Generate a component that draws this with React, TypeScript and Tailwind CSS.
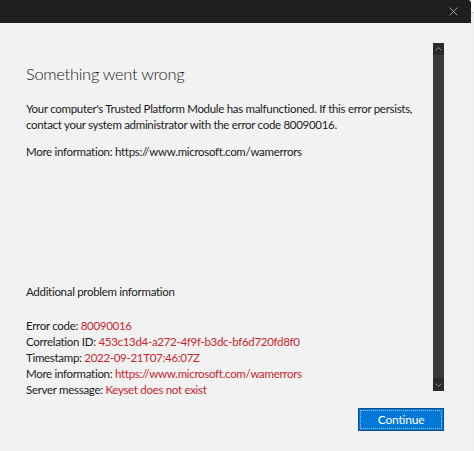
export default function App() {
  const font = { fontFamily: 'Lato, "Noto Sans", sans-serif' };
  return (
    <div className="flex w-[474px] h-[451px] bg-[#f3f3f3]" style={font}>
      <div className="flex flex-col w-[471px] h-full">
        {/* Title bar */}
        <div className="flex items-center justify-end h-[23px] bg-[#1f1f1f] rounded-tr-[3px] pr-[13px]">
          <svg width="9" height="9" viewBox="0 0 9 9" className="text-[#9a9a9a]">
            <path d="M0.5 0.5 L8.5 8.5 M8.5 0.5 L0.5 8.5" stroke="currentColor" strokeWidth="1" />
          </svg>
        </div>

        {/* Body */}
        <div className="flex flex-col flex-1 bg-[#f2f2f2]">
          <div className="flex h-[368px]">
            <div className="flex flex-col flex-1 pl-[26px] pt-[37px] text-[11.5px] leading-[16px] tracking-[-0.3px] text-[#1b1b1b]">
              <h1 className="text-[16.5px] leading-[28px] tracking-[-0.3px] font-light text-[#1a1a1a]">Something went wrong</h1>
              <p className="mt-[13px]">
                Your computer's Trusted Platform Module has malfunctioned. If this error persists, contact your
                system administrator with the error code 80090016.
              </p>
              <p className="mt-[11px]">More information: https://www.microsoft.com/wamerrors</p>

              <p className="mt-[124px]">Additional problem information</p>
              <div className="mt-[18px]">
                <div>
                  Error code: <span className="text-[#c9252d]">80090016</span>
                </div>
                <div>
                  Correlation ID: <span className="text-[#c9252d]">453c13d4-a272-4f9f-b3dc-bf6d720fd8f0</span>
                </div>
                <div>
                  Timestamp: <span className="text-[#c9252d]">2022-09-21T07:46:07Z</span>
                </div>
                <div>
                  More information: <span className="text-[#c9252d]">https://www.microsoft.com/wamerrors</span>
                </div>
                <div>
                  Server message: <span className="text-[#c9252d]">Keyset does not exist</span>
                </div>
              </div>
            </div>

            {/* Scrollbar */}
            <div className="flex flex-col w-[11px] mt-[20px] mr-[27px] bg-[#3a3a3a]">
              <div className="flex items-center justify-center h-[12px] bg-[#2b2b2b]">
                <svg width="7" height="4" viewBox="0 0 7 4">
                  <path d="M0.5 3.5 L3.5 0.5 L6.5 3.5" stroke="#8a8a8a" strokeWidth="1" fill="none" />
                </svg>
              </div>
              <div className="flex-1" />
              <div className="flex items-center justify-center h-[13px] bg-[#2b2b2b]">
                <svg width="7" height="4" viewBox="0 0 7 4">
                  <path d="M0.5 0.5 L3.5 3.5 L6.5 0.5" stroke="#8a8a8a" strokeWidth="1" fill="none" />
                </svg>
              </div>
            </div>
          </div>

          {/* Footer */}
          <div className="flex justify-end pr-[27px] pt-[17px]">
            <button className="w-[86px] h-[23px] bg-[#0078d7] border border-[#0a4f94] p-[1px] text-white text-[12px] tracking-[-0.2px]">
              <span className="flex items-center justify-center w-full h-full border border-dotted border-[#9cc9f0]">
                Continue
              </span>
            </button>
          </div>
        </div>
      </div>
      <div className="flex flex-col w-[3px] h-full bg-[#f0f0f0]">
        <div className="h-[12px] bg-[#ffffff]" />
        <div className="h-[1px] bg-[#c8c8c8]" />
      </div>
    </div>
  );
}
